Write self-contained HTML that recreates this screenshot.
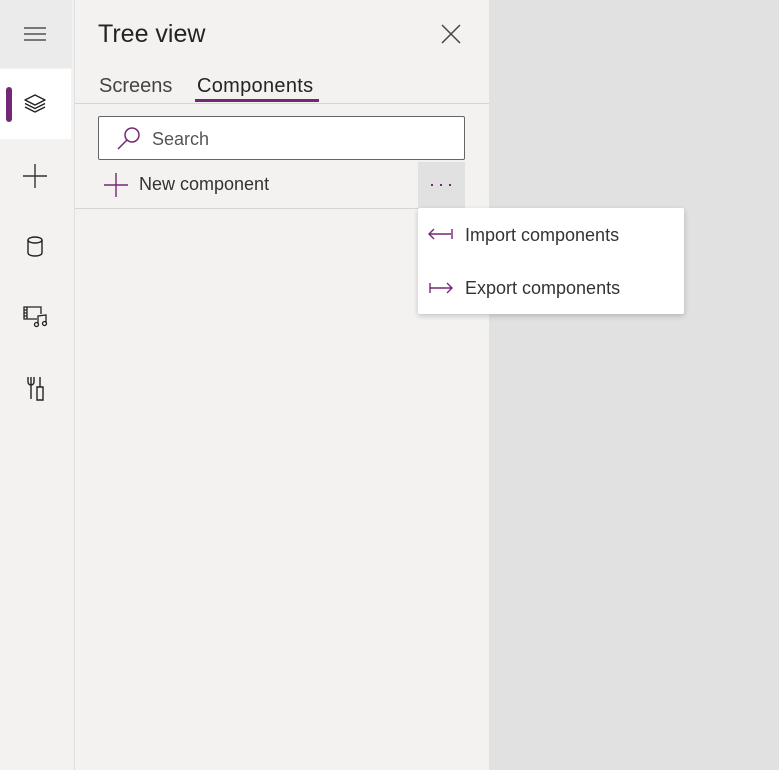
<!DOCTYPE html>
<html><head><style>
body{margin:0;width:779px;height:770px;background:#e1e1e1;font-family:"Liberation Sans",sans-serif;position:relative;overflow:hidden}
.a{position:absolute}
.d{position:absolute;width:2px;height:2px;background:#742774;top:184px}
</style></head><body>
<div class="a" style="left:0;top:0;width:74px;height:770px;background:#f3f2f1;border-right:1px solid #e0dfde"></div>
<div class="a" style="left:0;top:0;width:72px;height:68px;background:#ebebeb"></div>
<svg class="a" style="top:25px;left:23px" width="24" height="18"><path d="M1 3H23M1 9H23M1 15H23" stroke="#333" stroke-width="1.3"/></svg>
<div class="a" style="left:0;top:69px;width:71px;height:70px;background:#fff"></div>
<div class="a" style="left:6px;top:87px;width:6px;height:35px;background:#742774;border-radius:3px"></div>
<svg class="a" style="left:23px;top:92px" width="24" height="24"><g fill="none" stroke="#222" stroke-width="1.4" stroke-linejoin="round"><path d="M12 3L22 8L12 13L2 8Z"/><path d="M2 11.5L12 16.5L22 11.5"/><path d="M2 15L12 20L22 15"/></g></svg>
<svg class="a" style="left:22px;top:163px" width="26" height="26"><path d="M13 1V25M1 13H25" stroke="#333" stroke-width="1.4"/></svg>
<svg class="a" style="left:25px;top:235px" width="20" height="24"><g fill="none" stroke="#222" stroke-width="1.4"><ellipse cx="10" cy="5" rx="7" ry="3"/><path d="M3 5V18A7 3 0 0 0 17 18V5"/></g></svg>
<svg class="a" style="left:23px;top:305px" width="26" height="24"><g fill="none" stroke="#222" stroke-width="1.3"><path d="M14 14H1V2H18V9"/><path d="M4 2V14M1 5H4M1 8H4M1 11H4"/><path d="M15 19V11L23 10V18"/><circle cx="13.5" cy="19.5" r="2"/><circle cx="21.5" cy="18.5" r="2"/></g></svg>
<svg class="a" style="left:26px;top:375px" width="20" height="28"><g fill="none" stroke="#222" stroke-width="1.4"><path d="M5 2V10M2 2V7A3 3 0 0 0 8 7V2M5 10V24"/><path d="M14 2V12M11 12H17V25H11Z"/></g></svg>
<div class="a" style="left:75px;top:0;width:414px;height:770px;background:#f3f2f1"></div>
<div class="a" style="left:98px;top:20px;font-size:25px;color:#252423">Tree view</div>
<svg class="a" style="left:441px;top:24px" width="20" height="20"><path d="M1 1L19 19M19 1L1 19" stroke="#444" stroke-width="1.5"/></svg>
<div class="a" style="left:99px;top:75px;font-size:20px;color:#444">Screens</div>
<div class="a" style="left:197px;top:75px;font-size:20px;color:#252423;letter-spacing:0.3px">Components</div>
<div class="a" style="left:195px;top:99px;width:124px;height:3px;background:#742774"></div>
<div class="a" style="left:75px;top:103px;width:414px;height:1px;background:#d6d5d4"></div>
<div class="a" style="left:98px;top:116px;width:365px;height:42px;background:#fff;border:1px solid #666;border-radius:2px"></div>
<svg class="a" style="left:116px;top:126px" width="26" height="26"><g fill="none" stroke="#742774" stroke-width="1.5"><circle cx="16" cy="9" r="7"/><path d="M11 14L2 23"/></g></svg>
<div class="a" style="left:152px;top:129px;font-size:18px;color:#555">Search</div>
<svg class="a" style="left:103px;top:172px" width="26" height="26"><path d="M13 1V25M1 13H25" stroke="#742774" stroke-width="1.4"/></svg>
<div class="a" style="left:139px;top:174px;font-size:18px;color:#333">New component</div>
<div class="a" style="left:418px;top:162px;width:47px;height:46px;background:#e1e1e1"></div>
<div class="d" style="left:431px"></div><div class="d" style="left:440px"></div><div class="d" style="left:449px"></div>
<div class="a" style="left:75px;top:208px;width:414px;height:1px;background:#d6d5d4"></div>
<div class="a" style="left:418px;top:208px;width:266px;height:106px;background:#fff;box-shadow:0 2px 6px rgba(0,0,0,.2);border-radius:2px"></div>
<svg class="a" style="left:428px;top:226px" width="26" height="16"><path d="M1 8H23M6 3L1 8L6 13M24 3V13" fill="none" stroke="#742774" stroke-width="1.4"/></svg>
<div class="a" style="left:465px;top:225px;font-size:18px;color:#333">Import components</div>
<svg class="a" style="left:428px;top:280px" width="26" height="16"><path d="M2 8H24M19 3L24 8L19 13M2 3V13" fill="none" stroke="#742774" stroke-width="1.4"/></svg>
<div class="a" style="left:465px;top:278px;font-size:18px;color:#333">Export components</div>
</body></html>
